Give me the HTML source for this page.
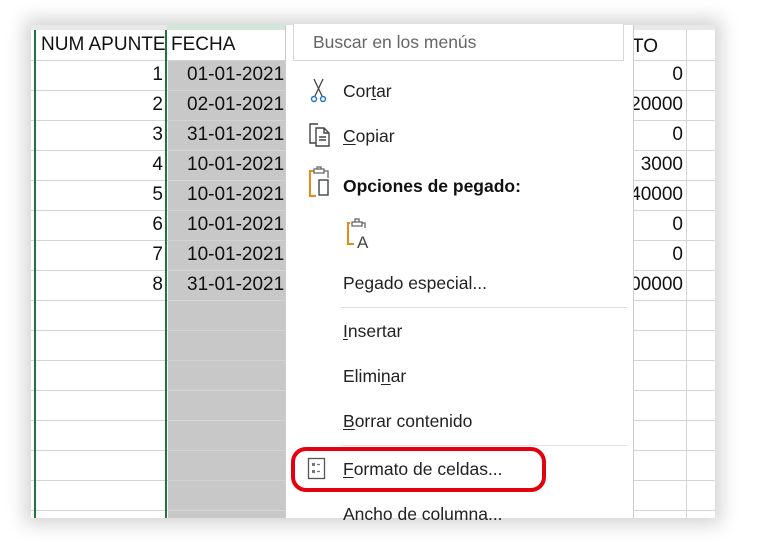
<!DOCTYPE html>
<html><head><meta charset="utf-8"><style>
body{margin:0;width:757px;height:551px;background:#fff;position:relative;overflow:hidden;font-family:"Liberation Sans",sans-serif}
#shot{position:absolute;left:31px;top:25px;width:684px;height:493px;background:#fff;overflow:hidden;box-shadow:0 0 18px 6px rgba(0,0,0,0.18)}
.hl{position:absolute;left:0;width:684px;height:1px;background:#d4d4d4}
.vl{position:absolute;top:0;height:493px;width:1px;background:#d4d4d4}
.c{position:absolute;font-size:19px;color:#111;height:30px;line-height:30px;white-space:nowrap}
#menu{position:absolute;left:285px;top:25px;width:347px;height:493px;background:#fff;border-left:1px solid #ccc;border-right:1px solid #ccc}
.mi{position:absolute;left:57px;font-size:17.5px;color:#222;white-space:nowrap}
.sep{position:absolute;left:55px;right:6px;height:1px;background:#e0e0e0}
u{text-decoration:underline;text-underline-offset:2px}
</style></head><body>
<div id="shot">
<div style="position:absolute;left:0;top:0;width:684px;height:5px;background:#e8e8e8"></div>
<div style="position:absolute;left:136px;top:0;width:118px;height:5px;background:#d2e7d8"></div>
<div style="position:absolute;left:137px;top:35px;width:117px;height:458px;background:#c8c8c8"></div>
<div class="hl" style="top:35px"></div><div class="hl" style="top:65px"></div><div class="hl" style="top:95px"></div><div class="hl" style="top:125px"></div><div class="hl" style="top:155px"></div><div class="hl" style="top:185px"></div><div class="hl" style="top:215px"></div><div class="hl" style="top:245px"></div><div class="hl" style="top:275px"></div><div class="hl" style="top:305px"></div><div class="hl" style="top:335px"></div><div class="hl" style="top:365px"></div><div class="hl" style="top:395px"></div><div class="hl" style="top:425px"></div><div class="hl" style="top:455px"></div><div class="hl" style="top:485px"></div>
<div class="vl" style="left:655px;top:5px"></div>
<div class="c" style="left:10px;top:5px">NUM APUNTE</div>
<div class="c" style="left:136px;top:5px;background:#fff;width:118px;padding-left:4px">FECHA</div>
<div style="position:absolute;left:3px;top:5px;width:2px;height:488px;background:#217346"></div>
<div style="position:absolute;left:134px;top:5px;width:2px;height:488px;background:#217346"></div>
<div class="c" style="right:552px;top:35px">1</div><div class="c" style="right:552px;top:65px">2</div><div class="c" style="right:552px;top:95px">3</div><div class="c" style="right:552px;top:125px">4</div><div class="c" style="right:552px;top:155px">5</div><div class="c" style="right:552px;top:185px">6</div><div class="c" style="right:552px;top:215px">7</div><div class="c" style="right:552px;top:245px">8</div>
<div class="c" style="left:156px;top:35px">01-01-2021</div><div class="c" style="left:156px;top:65px">02-01-2021</div><div class="c" style="left:156px;top:95px">31-01-2021</div><div class="c" style="left:156px;top:125px">10-01-2021</div><div class="c" style="left:156px;top:155px">10-01-2021</div><div class="c" style="left:156px;top:185px">10-01-2021</div><div class="c" style="left:156px;top:215px">10-01-2021</div><div class="c" style="left:156px;top:245px">31-01-2021</div>
<div class="c" style="left:601px;top:7px">TO</div>
<div class="c" style="right:32px;top:35px">0</div><div class="c" style="right:32px;top:65px">20000</div><div class="c" style="right:32px;top:95px">0</div><div class="c" style="right:32px;top:125px">3000</div><div class="c" style="right:32px;top:155px">40000</div><div class="c" style="right:32px;top:185px">0</div><div class="c" style="right:32px;top:215px">0</div><div class="c" style="right:32px;top:245px">00000</div>
</div>
<div id="menu">
<div style="position:absolute;left:7px;top:-1px;width:329px;height:36px;border:1px solid #d6d6d6;border-top:none;background:#fff"></div>
<div class="mi" style="left:27px;top:7px;color:#666">Buscar en los menús</div>
<svg style="position:absolute;left:22px;top:52px" width="22" height="26" viewBox="0 0 22 26"><path d="M6 2 L14 19 M15 2 L7 19" stroke="#444" stroke-width="1.3" fill="none"/><circle cx="6" cy="22" r="2.5" stroke="#1e73be" stroke-width="1.4" fill="none"/><circle cx="15" cy="22" r="2.5" stroke="#1e73be" stroke-width="1.4" fill="none"/></svg>
<div class="mi" style="top:56px">Cor<u>t</u>ar</div>
<svg style="position:absolute;left:22px;top:97px" width="28" height="26" viewBox="0 0 28 26"><path d="M10 2 H2 V21 H8 M8 6 H16 L21 11 V24 H8 Z M16 6 V11 H21 M11 15 H18 M11 18 H18" stroke="#444" stroke-width="1.4" fill="none"/></svg>
<div class="mi" style="top:101px"><u>C</u>opiar</div>
<svg style="position:absolute;left:20px;top:140px" width="28" height="34" viewBox="0 0 28 34"><path d="M8 6 H4 V31 H10" stroke="#e8891c" stroke-width="2" fill="none"/><path d="M8 4 H18 V8 H8 Z M11 4 V2 H15 V4" stroke="#666" stroke-width="1.3" fill="none"/><path d="M18 6 H22 V13" stroke="#666" stroke-width="1.3" fill="none"/><rect x="13" y="15" width="9" height="15" stroke="#444" stroke-width="1.4" fill="none"/></svg>
<div class="mi" style="top:151px;font-weight:bold;color:#111">Opciones de pegado:</div>
<svg style="position:absolute;left:60px;top:193px" width="30" height="32" viewBox="0 0 30 32"><path d="M4 5 H2 V26 H8" stroke="#e8891c" stroke-width="2" fill="none"/><path d="M6 4 H16 V8 H6 Z M9 4 V1 H13 V4 M16 5 H19 V10" stroke="#666" stroke-width="1.3" fill="none"/><text x="11" y="30" font-family="Liberation Sans" font-size="17" fill="#444">A</text></svg>
<div class="mi" style="top:248px">Pe<u>g</u>ado especial...</div>
<div class="sep" style="top:282px"></div>
<div class="mi" style="top:296px"><u>I</u>nsertar</div>
<div class="mi" style="top:341px">Elimi<u>n</u>ar</div>
<div class="mi" style="top:386px"><u>B</u>orrar contenido</div>
<div class="sep" style="top:420px"></div>
<svg style="position:absolute;left:21px;top:432px" width="20" height="24" viewBox="0 0 20 24"><rect x="1.5" y="1.5" width="16" height="20" stroke="#555" stroke-width="1.3" fill="none"/><rect x="5" y="6" width="3" height="3" fill="#777"/><rect x="5" y="13" width="3" height="3" fill="#777"/><path d="M10 7.5 H13 M10 14.5 H13" stroke="#777" stroke-width="1.3"/></svg>
<div class="mi" style="top:434px"><u>F</u>ormato de celdas...</div>
<div class="mi" style="top:479px">Ancho de columna...</div>
</div>
<div style="position:absolute;left:291px;top:447px;width:247px;height:37px;border:4px solid #e3000f;border-radius:15px"></div>
</body></html>
